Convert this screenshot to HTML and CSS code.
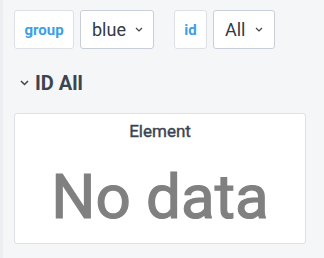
FILE: index.html
```html
<!DOCTYPE html>
<html>
<head>
<meta charset="utf-8">
<link rel="stylesheet" href="styles.css">
</head>
<body>
<div class="page">
  <div class="filters">
    <div class="label">group</div>
    <div class="select sel-blue"><span>blue</span><svg class="chev" width="8" height="5" viewBox="0 0 8 5"><path d="M1 1l3 3 3-3" fill="none" stroke="#444" stroke-width="1.2"/></svg></div>
    <div class="label label-id">id</div>
    <div class="select sel-all"><span>All</span><svg class="chev" width="8" height="5" viewBox="0 0 8 5"><path d="M1 1l3 3 3-3" fill="none" stroke="#444" stroke-width="1.2"/></svg></div>
  </div>
  <div class="section-head">
    <svg class="head-chev" width="9" height="6" viewBox="0 0 9 6"><path d="M1 1l3.5 3.5 3.5-3.5" fill="none" stroke="#3c4450" stroke-width="1.5"/></svg>
    <span>ID All</span>
  </div>
  <div class="card">
    <div class="card-title">Element</div>
    <div class="nodata">No data</div>
  </div>
</div>
</body>
</html>
```

FILE: styles.css
```css
html, body {
  margin: 0;
  padding: 0;
  background: #f5f6f8;
  font-family: Roboto, "Liberation Sans", sans-serif;
}
.page {
  border-left: 3px solid #eceef1;
  min-height: 258px;
  box-sizing: border-box;
  padding: 10px 0 0 11px;
}
.filters {
  display: flex;
  align-items: center;
}
.label {
  box-sizing: border-box;
  width: 60px;
  height: 39px;
  background: #fff;
  border: 1px solid #dde1e6;
  border-radius: 3px;
  display: flex;
  align-items: center;
  justify-content: center;
  color: #3d9fe4;
  font-weight: 700;
  font-size: 15px;
  margin-right: 6px;
}
.label-id {
  width: 33px;
  margin-left: 20px;
}
.select {
  box-sizing: border-box;
  height: 39px;
  background: #fff;
  border: 1px solid #c9cfd8;
  border-radius: 3px;
  display: flex;
  align-items: center;
  padding-left: 11px;
  color: #333a44;
  font-size: 18px;
}
.sel-blue { width: 74px; }
.sel-all { width: 62px; }
.chev { margin-left: 9px; }
.section-head {
  display: flex;
  align-items: center;
  height: 26px;
  margin-top: 21px;
  color: #3c4450;
  font-size: 20px;
  font-weight: 700;
}
.head-chev {
  margin-left: 6px;
  margin-right: 6px;
}
.card {
  box-sizing: border-box;
  margin-top: 17px;
  width: 292px;
  height: 131px;
  background: #fff;
  border: 1px solid #dde1e6;
  border-radius: 3px;
  display: flex;
  flex-direction: column;
  align-items: center;
}
.card-title {
  margin-top: 7px;
  font-size: 17px;
  font-weight: 400;
  -webkit-text-stroke: 0.4px #3c4450;
  color: #3c4450;
}
.nodata {
  margin-top: 25px;
  font-size: 62px;
  font-weight: 400;
  -webkit-text-stroke: 1.2px #808080;
  color: #808080;
  line-height: 1;
}
```
